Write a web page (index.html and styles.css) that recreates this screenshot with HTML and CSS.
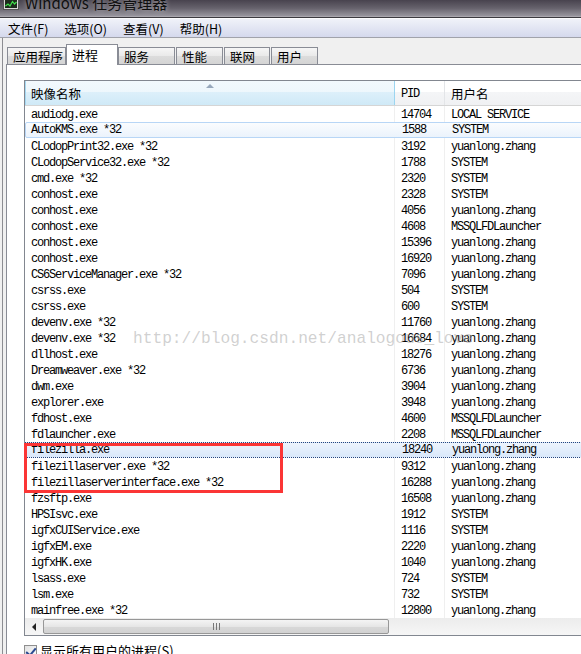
FILE: index.html
```html
<!DOCTYPE html>
<html lang="zh-CN">
<head>
  <meta charset="UTF-8"/>
  <title>Windows 任务管理器</title>
  <link rel="stylesheet" href="styles.css">
</head>
<body>
  <div class="titlebar">
    <svg class="app-icon" width="16" height="13" viewBox="0 0 16 13">
      <rect x="0.5" y="0.5" width="15" height="11" fill="#d8d8d8" stroke="#555"/>
      <rect x="2" y="2" width="12" height="8" fill="#1c2a1c"/>
      <polyline points="2.5,8 5,6 7,8 9.5,3.5 11.5,6 13.5,4" fill="none" stroke="#3fe04a" stroke-width="1.2"/>
    </svg>
    <span class="title">Windows 任务管理器</span>
  </div>

  <div class="menubar">
    <span>文件(F)</span>
    <span>选项(O)</span>
    <span>查看(V)</span>
    <span>帮助(H)</span>
  </div>

  <div class="client">
    <div class="tabstrip">
      <div class="tab w59">应用程序</div>
      <div class="tab active">进程</div>
      <div class="tab w57">服务</div>
      <div class="tab w47">性能</div>
      <div class="tab w46">联网</div>
      <div class="tab w47">用户</div>
    </div>

    <div class="panel">
      <div class="listview">
        <div class="lv-head">
          <div class="hcell sorted">映像名称<span class="sort-arrow"></span></div>
          <div class="hcell mono">PID</div>
          <div class="hcell">用户名</div>
        </div>

        <div class="lv-body">
          <div class="row"><span>audiodg.exe</span><span>14704</span><span>LOCAL SERVICE</span></div>
          <div class="row hover"><span>AutoKMS.exe *32</span><span>1588</span><span>SYSTEM</span></div>
          <div class="row"><span>CLodopPrint32.exe *32</span><span>3192</span><span>yuanlong.zhang</span></div>
          <div class="row"><span>CLodopService32.exe *32</span><span>1788</span><span>SYSTEM</span></div>
          <div class="row"><span>cmd.exe *32</span><span>2320</span><span>SYSTEM</span></div>
          <div class="row"><span>conhost.exe</span><span>2328</span><span>SYSTEM</span></div>
          <div class="row"><span>conhost.exe</span><span>4056</span><span>yuanlong.zhang</span></div>
          <div class="row"><span>conhost.exe</span><span>4608</span><span>MSSQLFDLauncher</span></div>
          <div class="row"><span>conhost.exe</span><span>15396</span><span>yuanlong.zhang</span></div>
          <div class="row"><span>conhost.exe</span><span>16920</span><span>yuanlong.zhang</span></div>
          <div class="row"><span>CS6ServiceManager.exe *32</span><span>7096</span><span>yuanlong.zhang</span></div>
          <div class="row"><span>csrss.exe</span><span>504</span><span>SYSTEM</span></div>
          <div class="row"><span>csrss.exe</span><span>600</span><span>SYSTEM</span></div>
          <div class="row"><span>devenv.exe *32</span><span>11760</span><span>yuanlong.zhang</span></div>
          <div class="row"><span>devenv.exe *32</span><span>16684</span><span>yuanlong.zhang</span></div>
          <div class="row"><span>dllhost.exe</span><span>18276</span><span>yuanlong.zhang</span></div>
          <div class="row"><span>Dreamweaver.exe *32</span><span>6736</span><span>yuanlong.zhang</span></div>
          <div class="row"><span>dwm.exe</span><span>3904</span><span>yuanlong.zhang</span></div>
          <div class="row"><span>explorer.exe</span><span>3948</span><span>yuanlong.zhang</span></div>
          <div class="row"><span>fdhost.exe</span><span>4600</span><span>MSSQLFDLauncher</span></div>
          <div class="row"><span>fdlauncher.exe</span><span>2208</span><span>MSSQLFDLauncher</span></div>
          <div class="row selected"><span>filezilla.exe</span><span>18240</span><span>yuanlong.zhang</span></div>
          <div class="row"><span>filezillaserver.exe *32</span><span>9312</span><span>yuanlong.zhang</span></div>
          <div class="row"><span>filezillaserverinterface.exe *32</span><span>16288</span><span>yuanlong.zhang</span></div>
          <div class="row"><span>fzsftp.exe</span><span>16508</span><span>yuanlong.zhang</span></div>
          <div class="row"><span>HPSIsvc.exe</span><span>1912</span><span>SYSTEM</span></div>
          <div class="row"><span>igfxCUIService.exe</span><span>1116</span><span>SYSTEM</span></div>
          <div class="row"><span>igfxEM.exe</span><span>2220</span><span>yuanlong.zhang</span></div>
          <div class="row"><span>igfxHK.exe</span><span>1040</span><span>yuanlong.zhang</span></div>
          <div class="row"><span>lsass.exe</span><span>724</span><span>SYSTEM</span></div>
          <div class="row"><span>lsm.exe</span><span>732</span><span>SYSTEM</span></div>
          <div class="row"><span>mainfree.exe *32</span><span>12800</span><span>yuanlong.zhang</span></div>
        </div>

        <div class="hscroll">
          <div class="arrow-btn"><span class="arrow-left"></span></div>
          <div class="thumb"><span class="grip"></span></div>
        </div>
      </div>

      <label class="check-row">
        <span class="checkbox"></span>
        显示所有用户的进程(S)
      </label>
    </div>
  </div>

  <!-- blog watermark and the red highlight drawn over the list -->
  <div class="watermark">http://blog.csdn.net/analogous_love</div>
  <div class="highlight-box"></div>
</body>
</html>
```

FILE: styles.css
```css
* { box-sizing: border-box; }
body { margin:0; width:581px; height:654px; overflow:hidden; position:relative; background:#f0f0f0; font-family:"Noto Sans CJK SC", sans-serif; font-size:12px; color:#000; }

/* window caption */
.titlebar {
  height: 18px;
  display: flex;
  align-items: flex-start;
  overflow: hidden;
  background: linear-gradient(#48434e 0%, #66626c 45%, #97949d 88%, #b3b1b7 94%, #3c3a40 95%);
}
.app-icon { margin:-2px 0 0 3px; flex:none; }
.title {
  margin: -7px 0 0 6px;
  font-size: 15px;
  line-height: 20px;
  color: #101010;
  text-shadow: 0 0 5px rgba(255,255,255,0.55);
}

/* menu */
.menubar {
  height: 20px;
  border-top: 1px solid #fbfbfd;
  border-bottom: 1px solid #a1a3ab;
  background: linear-gradient(#f0f2f9, #d5d9ed);
  display: flex;
  padding: 1px 0 0 8px;
  gap: 16px;
  line-height: 18px;
  font-size: 12.5px;
}

.client { margin-left:2px; border-left:1px solid #8c8d92; height:616px; }

/* tabs */
.tabstrip { height:26px; display:flex; align-items:flex-end; gap:1px; padding-left:4px; }
.tab {
  height: 17px;
  line-height: 17px;
  padding-left: 5px;
  border: 1px solid #898c95;
  border-bottom: none;
  background: linear-gradient(#f6f6f6 0%, #e9e9e9 50%, #dcdcdc 51%, #d4d4d4 100%);
  font-size: 12.5px;
}
.tab.w59 { width:59px; }
.tab.w57 { width:57px; }
.tab.w47 { width:47px; }
.tab.w46 { width:46px; }
.tab.active {
  width: 52px;
  height: 21px;
  margin: 0 -1px -1px -1px;
  background: #fff;
  position: relative;
  z-index: 1;
  line-height: 19px;
  font-size: 13px;
}

.panel {
  margin-left: 3px;
  background: #fff;
  border-top: 1px solid #898c95;
  border-left: 1px solid #898c95;
  padding: 15px 0 0 17px;
  height: 590px;
}

/* list view */
.listview { width:600px; border:1px solid #828790; border-right:none; }
.lv-head { display:grid; grid-template-columns:370px 50px 1fr; height:25px; border-bottom:1px solid #d5d5d5; }
.hcell {
  position: relative;
  padding: 2px 0 0 6px;
  line-height: 22px;
  font-size: 12.5px;
  background: linear-gradient(#ffffff 0%, #ffffff 45%, #f4f5f7 46%, #f0f1f3 100%);
  border-right: 1px solid #e3e5e8;
}
.hcell.sorted {
  padding-left: 5px;
  border-left: 1px solid #a6d9f2;
  border-right: 1px solid #9cd5f0;
  background: linear-gradient(#f2f9fd 0%, #eef7fc 45%, #ddf0fa 46%, #cfe9f7 100%);
}
.hcell.mono { font-family:"Liberation Mono", monospace; font-size:12px; letter-spacing:-1.2px; }
.sort-arrow {
  position: absolute;
  left: 180px;
  top: 3px;
  border-left: 4px solid transparent;
  border-right: 4px solid transparent;
  border-bottom: 4px solid #97a8bc;
}

.lv-body { font-family:"Liberation Mono", monospace; font-size:12px; letter-spacing:-1.2px; }
.row { display:grid; grid-template-columns:370px 50px 1fr; height:16px; white-space:nowrap; overflow:hidden; }
.row span { padding:2px 0 0 6px; line-height:14px; border-right:1px solid #efefef; }
.row span:last-child { border-right:none; }
.row.hover {
  border: 1px solid #b8d6f6;
  border-radius: 2px;
  background: linear-gradient(#fafcfe, #ebf3fc);
}
.row.selected {
  border: 1px dotted #26467e;
  background: linear-gradient(#edf4fd, #d9e8fa);
}
.row.hover span, .row.selected span { padding-top:1px; line-height:13px; border-right-color:transparent; }
.row.hover span:first-child, .row.selected span:first-child { padding-left:5px; }

.hscroll { height:17px; display:flex; align-items:center; background:linear-gradient(#ececec, #f6f6f6); }
.arrow-btn { width:17px; height:17px; display:flex; align-items:center; justify-content:center; }
.arrow-left { border-top:4px solid transparent; border-bottom:4px solid transparent; border-right:4px solid #222; }
.thumb {
  width: 346px;
  height: 15px;
  margin-left: 1px;
  border: 1px solid #979797;
  border-radius: 2px;
  background: linear-gradient(#f4f4f4 0%, #e6e6e6 50%, #d8d8d8 51%, #d2d2d2 100%);
  display: flex;
  align-items: center;
  justify-content: center;
}
.grip { width:7px; height:7px; border-left:1px solid #777; border-right:1px solid #777; position:relative; }
.grip:after { content:""; position:absolute; left:2px; top:0; width:1px; height:7px; background:#777; }

/* footer checkbox */
.check-row { display:flex; align-items:center; gap:3px; margin-top:7px; font-size:13px; line-height:16px; }
.checkbox {
  width: 13px;
  height: 13px;
  border: 1px solid #8f8f8f;
  background: linear-gradient(135deg, #e2e2e2, #fcfcfc);
  position: relative;
}
.checkbox:after {
  content: "";
  position: absolute;
  left: 3px;
  top: 0px;
  width: 4px;
  height: 8px;
  border: solid #2b4a92;
  border-width: 0 2px 2px 0;
  transform: rotate(40deg);
}

.watermark {
  position: absolute;
  left: 133px;
  top: 329px;
  font-family: "Liberation Mono", monospace;
  font-size: 16.2px;
  line-height: 20px;
  color: rgba(170,170,170,0.55);
  white-space: nowrap;
}
.highlight-box {
  position: absolute;
  left: 24px;
  top: 443px;
  width: 259px;
  height: 50px;
  border: 3px solid #fb3535;
}
```
